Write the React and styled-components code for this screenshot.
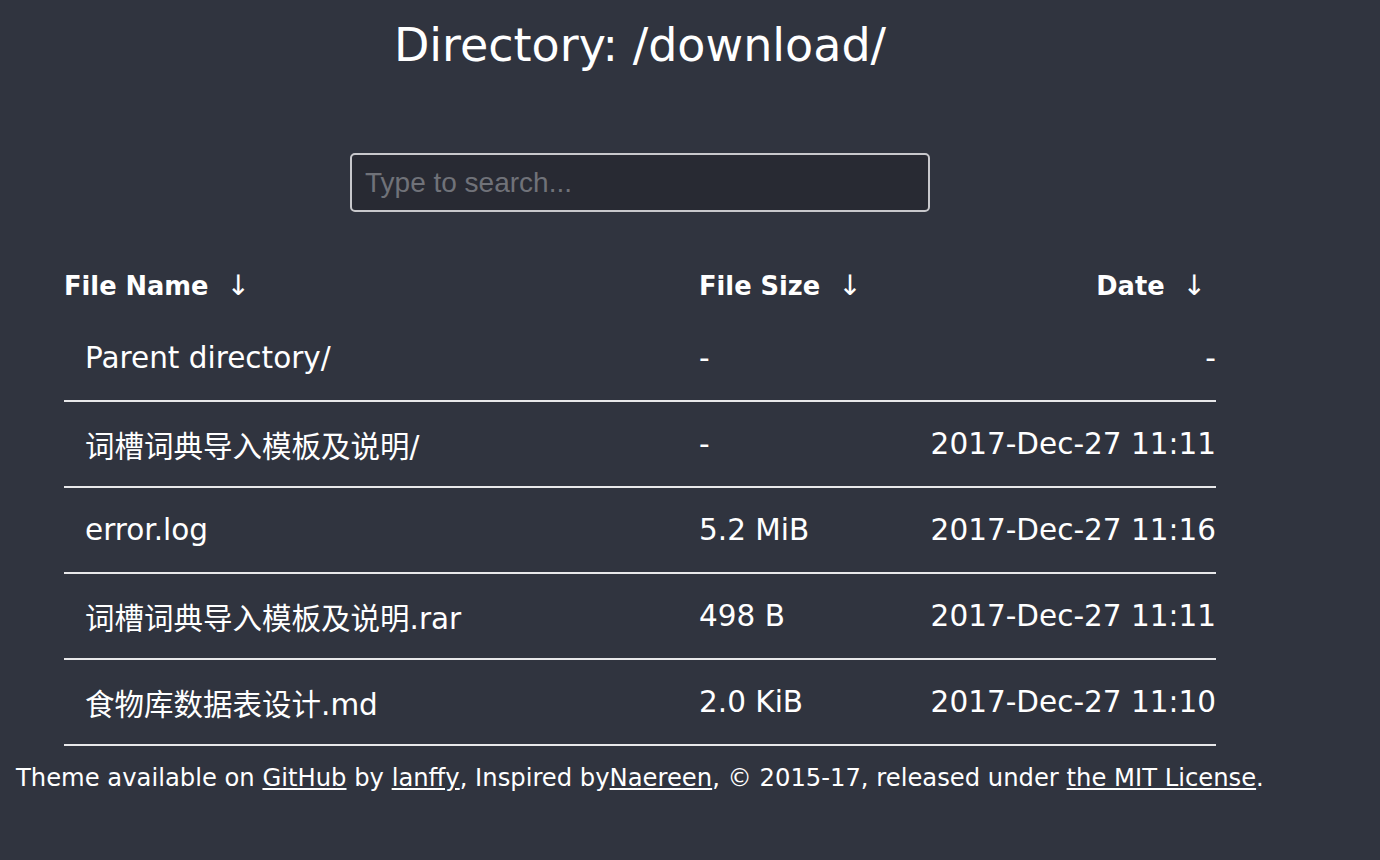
import styled, { createGlobalStyle } from "styled-components";

const GlobalStyle = createGlobalStyle`
  html, body {
    margin: 0;
    padding: 0;
    background: #30343f;
  }
  body {
    font-family: "DejaVu Sans", Verdana, "Noto Sans CJK SC", sans-serif;
    color: #ffffff;
  }
`;

const files = [
  { name: "Parent directory/", size: "-", date: "-" },
  { name: "词槽词典导入模板及说明/", size: "-", date: "2017-Dec-27 11:11" },
  { name: "error.log", size: "5.2 MiB", date: "2017-Dec-27 11:16" },
  { name: "词槽词典导入模板及说明.rar", size: "498 B", date: "2017-Dec-27 11:11" },
  { name: "食物库数据表设计.md", size: "2.0 KiB", date: "2017-Dec-27 11:10" },
];

function App() {
  return (
    <Page>
      <GlobalStyle />
      <Container>
        <Title>Directory: /download/</Title>
        <SearchWrap>
          <Search placeholder="Type to search..." />
        </SearchWrap>
        <Table>
          <thead>
            <tr>
              <Th>
                File Name <Arrow>↓</Arrow>
              </Th>
              <Th>
                File Size <Arrow>↓</Arrow>
              </Th>
              <Th align="right">
                Date <Arrow>↓</Arrow>
              </Th>
            </tr>
          </thead>
          <tbody>
            {files.map((f, i) => (
              <Row key={i}>
                <NameCell>{f.name}</NameCell>
                <Td>{f.size}</Td>
                <Td align="right">{f.date}</Td>
              </Row>
            ))}
          </tbody>
        </Table>
        <Footer>
          Theme available on <a href="#">GitHub</a> by <a href="#">lanffy</a>,
          Inspired by<a href="#">Naereen</a>, © 2015-17, released under{" "}
          <a href="#">the MIT License</a>.
        </Footer>
      </Container>
    </Page>
  );
}

const Page = styled.div`
  min-height: 100vh;
  background: #30343f;
`;

const Container = styled.div`
  width: 1280px;
`;

const Title = styled.h1`
  margin: 0;
  padding-top: 18px;
  font-size: 46px;
  font-weight: normal;
  line-height: 55px;
  text-align: center;
`;

const SearchWrap = styled.div`
  display: flex;
  justify-content: center;
  margin-top: 80px;
`;

const Search = styled.input`
  box-sizing: border-box;
  width: 580px;
  height: 59px;
  padding: 0 13px;
  background: #282a33;
  border: 2px solid #c8c8cc;
  border-radius: 5px;
  color: #ffffff;
  font-family: "Liberation Sans", Arial, sans-serif;
  font-size: 28px;
  font-weight: 300;
  outline: none;
  &::placeholder {
    color: #707279;
  }
`;

const Table = styled.table`
  width: 1152px;
  margin: 43px 0 0 64px;
  border-collapse: collapse;
`;

const Th = styled.th`
  height: 60px;
  padding: 0;
  text-align: ${(p) => p.align || "left"};
  padding-right: ${(p) => (p.align === "right" ? "10px" : "0")};
  font-size: 25.7px;
  font-weight: bold;
  vertical-align: middle;
  &:nth-child(1) {
    width: 635px;
  }
`;

const Arrow = styled.span`
  font-weight: normal;
  font-size: 28px;
  margin-left: 9px;
`;

const Row = styled.tr`
  height: 86px;
  border-bottom: 2px solid #e8e8ea;
`;

const Td = styled.td`
  padding: 0;
  font-size: 29.5px;
  text-align: ${(p) => p.align || "left"};
  vertical-align: middle;
  white-space: nowrap;
`;

const NameCell = styled(Td)`
  padding-left: 21px;
`;

const Footer = styled.p`
  margin: 16px 0 0 16px;
  font-size: 24.25px;
  line-height: 32px;
  white-space: nowrap;
  a {
    color: #ffffff;
  }
`;

export default App;
